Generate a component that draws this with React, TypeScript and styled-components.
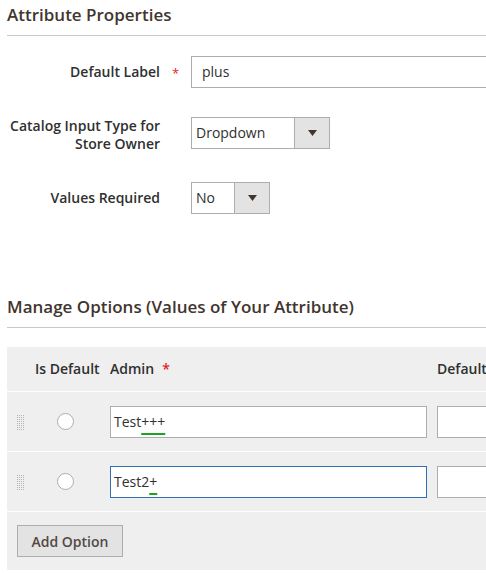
import React from "react";
import styled, { createGlobalStyle } from "styled-components";

const GlobalStyle = createGlobalStyle`
  html, body {
    margin: 0;
    padding: 0;
    background: #ffffff;
    overflow: hidden;
  }
  body {
    font-family: "Open Sans", "Liberation Sans", sans-serif;
    color: #303030;
  }
`;

const Page = styled.div`
  width: 760px;
  padding: 0 0 0 7px;
`;

const SectionTitle = styled.h2<{ top: number }>`
  margin: ${(p) => p.top}px 0 0 0;
  padding: 0 0 8px 0;
  font-size: 17px;
  font-weight: 600;
  line-height: 24px;
  color: #41362f;
  border-bottom: 1px solid #cdc8c0;
`;

const Form = styled.div`
  display: flex;
  flex-direction: column;
  gap: 29px;
  margin-top: 20px;
`;

const Field = styled.div`
  display: grid;
  grid-template-columns: 153px 31px 1fr;
  align-items: start;
`;

const Label = styled.div<{ offset: number }>`
  padding-top: ${(p) => p.offset}px;
  font-size: 14px;
  font-weight: 600;
  line-height: 18px;
  text-align: right;
  color: #303030;
`;

const Required = styled.span`
  display: block;
  padding-top: 8px;
  text-align: center;
  font-size: 13px;
  line-height: 18px;
  color: #e22626;
`;

const TextBox = styled.div<{ width?: number; pad: number; focused?: boolean }>`
  box-sizing: border-box;
  width: ${(p) => (p.width ? `${p.width}px` : "100%")};
  height: 32px;
  padding: 0 ${(p) => p.pad}px;
  border: 1px solid ${(p) => (p.focused ? "#2f6fb2" : "#adadad")};
  background: #ffffff;
  font-size: 14px;
  line-height: 30px;
  color: #303030;
  white-space: nowrap;
`;

const Select = styled.div<{ width: number }>`
  box-sizing: border-box;
  display: flex;
  width: ${(p) => p.width}px;
  height: 32px;
  border: 1px solid #adadad;
  background: #ffffff;
`;

const SelectValue = styled.span`
  flex: 1;
  padding-left: 4px;
  font-size: 14px;
  line-height: 30px;
  color: #303030;
`;

const SelectArrow = styled.span`
  display: flex;
  align-items: center;
  justify-content: center;
  width: 34px;
  border-left: 1px solid #adadad;
  background: #e3e3e3;
`;

const Arrow = () => (
  <svg width="9" height="6" viewBox="0 0 9 6">
    <path d="M0 0h9L4.5 6z" fill="#41362f" />
  </svg>
);

const Table = styled.div`
  margin-top: 19px;
  background: #efefef;
`;

const Row = styled.div<{ head?: boolean }>`
  display: grid;
  grid-template-columns: 28px 75px 317px 300px;
  align-items: center;
  height: ${(p) => (p.head ? 44 : 60)}px;
  border-top: ${(p) => (p.head ? "none" : "1px solid #ffffff")};
  box-sizing: border-box;
`;

const HeadCell = styled.div<{ indent?: number }>`
  padding-left: ${(p) => p.indent || 0}px;
  font-size: 14px;
  font-weight: 600;
  line-height: 18px;
  color: #303030;
  white-space: nowrap;
`;

const Star = styled.span`
  margin-left: 8px;
  color: #e22626;
`;

const HandleBox = styled.span`
  display: block;
  width: 8px;
  height: 16px;
  margin-left: 10px;
`;

const Handle = () => (
  <HandleBox>
    <svg width="8" height="16" viewBox="0 0 8 16">
      {Array.from({ length: 32 }).map((_, i) => (
        <rect
          key={i}
          x={(i % 4) * 2}
          y={Math.floor(i / 4) * 2}
          width="1"
          height="1"
          fill="#b5b5b5"
        />
      ))}
    </svg>
  </HandleBox>
);

const Radio = styled.span`
  display: block;
  box-sizing: border-box;
  width: 17px;
  height: 17px;
  margin-left: 22px;
  border: 1px solid #adadad;
  border-radius: 50%;
  background: #ffffff;
`;

const DefaultCell = styled.div`
  padding-left: 10px;
`;

const Squiggle = styled.span`
  text-decoration: underline;
  text-decoration-color: #1fa31f;
  text-decoration-thickness: 2px;
  text-underline-offset: 6px;
`;

const Footer = styled.div`
  padding: 13px 10px 13px 10px;
  border-top: 1px solid #ffffff;
`;

const Button = styled.button`
  box-sizing: border-box;
  width: 106px;
  height: 32px;
  padding: 0;
  border: 1px solid #adadad;
  background: #e3e3e3;
  font-family: "Open Sans", "Liberation Sans", sans-serif;
  font-size: 14px;
  font-weight: 600;
  color: #514943;
  cursor: pointer;
`;

const options = [
  { id: 1, base: "Test", marked: "+++", focused: false },
  { id: 2, base: "Test2", marked: "+", focused: true },
];

export default function App() {
  return (
    <>
      <GlobalStyle />
      <Page>
        <SectionTitle top={3}>Attribute Properties</SectionTitle>
        <Form>
          <Field>
            <Label offset={7}>Default Label</Label>
            <Required>*</Required>
            <TextBox pad={10}>plus</TextBox>
          </Field>
          <Field>
            <Label offset={0}>
              Catalog Input Type for
              <br />
              Store Owner
            </Label>
            <span />
            <Select width={139}>
              <SelectValue>Dropdown</SelectValue>
              <SelectArrow>
                <Arrow />
              </SelectArrow>
            </Select>
          </Field>
          <Field>
            <Label offset={7}>Values Required</Label>
            <span />
            <Select width={79}>
              <SelectValue>No</SelectValue>
              <SelectArrow>
                <Arrow />
              </SelectArrow>
            </Select>
          </Field>
        </Form>

        <SectionTitle top={81}>Manage Options (Values of Your Attribute)</SectionTitle>
        <Table>
          <Row head>
            <span />
            <HeadCell>Is Default</HeadCell>
            <HeadCell>
              Admin<Star>*</Star>
            </HeadCell>
            <HeadCell indent={10}>Default Store View</HeadCell>
          </Row>
          {options.map((o) => (
            <Row key={o.id}>
              <Handle />
              <Radio />
              <TextBox pad={3} focused={o.focused}>
                {o.base}
                <Squiggle>{o.marked}</Squiggle>
              </TextBox>
              <DefaultCell>
                <TextBox pad={3} />
              </DefaultCell>
            </Row>
          ))}
          <Footer>
            <Button>Add Option</Button>
          </Footer>
        </Table>
      </Page>
    </>
  );
}
